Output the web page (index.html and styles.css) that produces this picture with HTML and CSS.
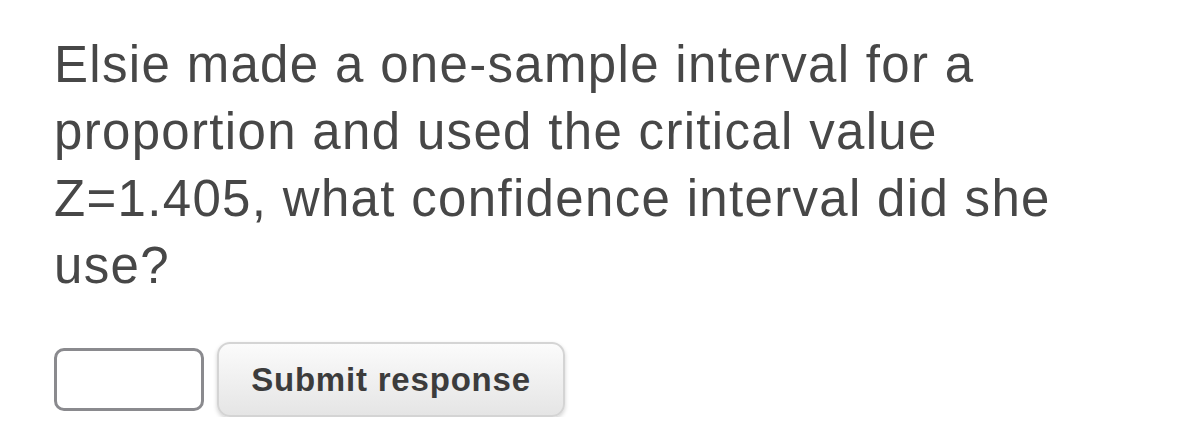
FILE: index.html
```html
<!DOCTYPE html>
<html>
<head>
<meta charset="utf-8">
<link rel="stylesheet" href="styles.css">
</head>
<body>
<div class="page">
  <p class="question">Elsie made a one-sample interval for a proportion and used the critical value Z=1.405, what confidence interval did she use?</p>
  <div class="answer-row">
    <input class="answer-input" type="text">
    <button class="submit-btn">Submit response</button>
  </div>
</div>
</body>
</html>
```
FILE: styles.css
```css
html, body {
  margin: 0;
  padding: 0;
  background: #ffffff;
}
.page {
  padding: 31px 0 0 54px;
  font-family: "Liberation Sans", Arial, sans-serif;
}
.question {
  margin: 0;
  width: 1080px;
  font-size: 51px;
  line-height: 67px;
  letter-spacing: 1.32px;
  color: #474747;
}
.answer-row {
  display: flex;
  align-items: center;
  gap: 13px;
  margin-top: 43px;
}
.answer-input {
  box-sizing: border-box;
  width: 150px;
  height: 63px;
  border: 3px solid #8a8a8e;
  border-radius: 10px;
  background: #fff;
  outline: none;
  margin: 0;
}
.submit-btn {
  box-sizing: border-box;
  width: 348px;
  height: 75px;
  border: 2px solid #d4d4d4;
  border-radius: 13px;
  background: linear-gradient(#fbfbfb, #e5e5e5);
  box-shadow: 0 2px 4px rgba(0,0,0,0.18);
  font-family: "Liberation Sans", Arial, sans-serif;
  font-weight: bold;
  font-size: 33px;
  letter-spacing: 0.8px;
  color: #3c3c3c;
  margin: 0;
  padding: 0;
}
```
